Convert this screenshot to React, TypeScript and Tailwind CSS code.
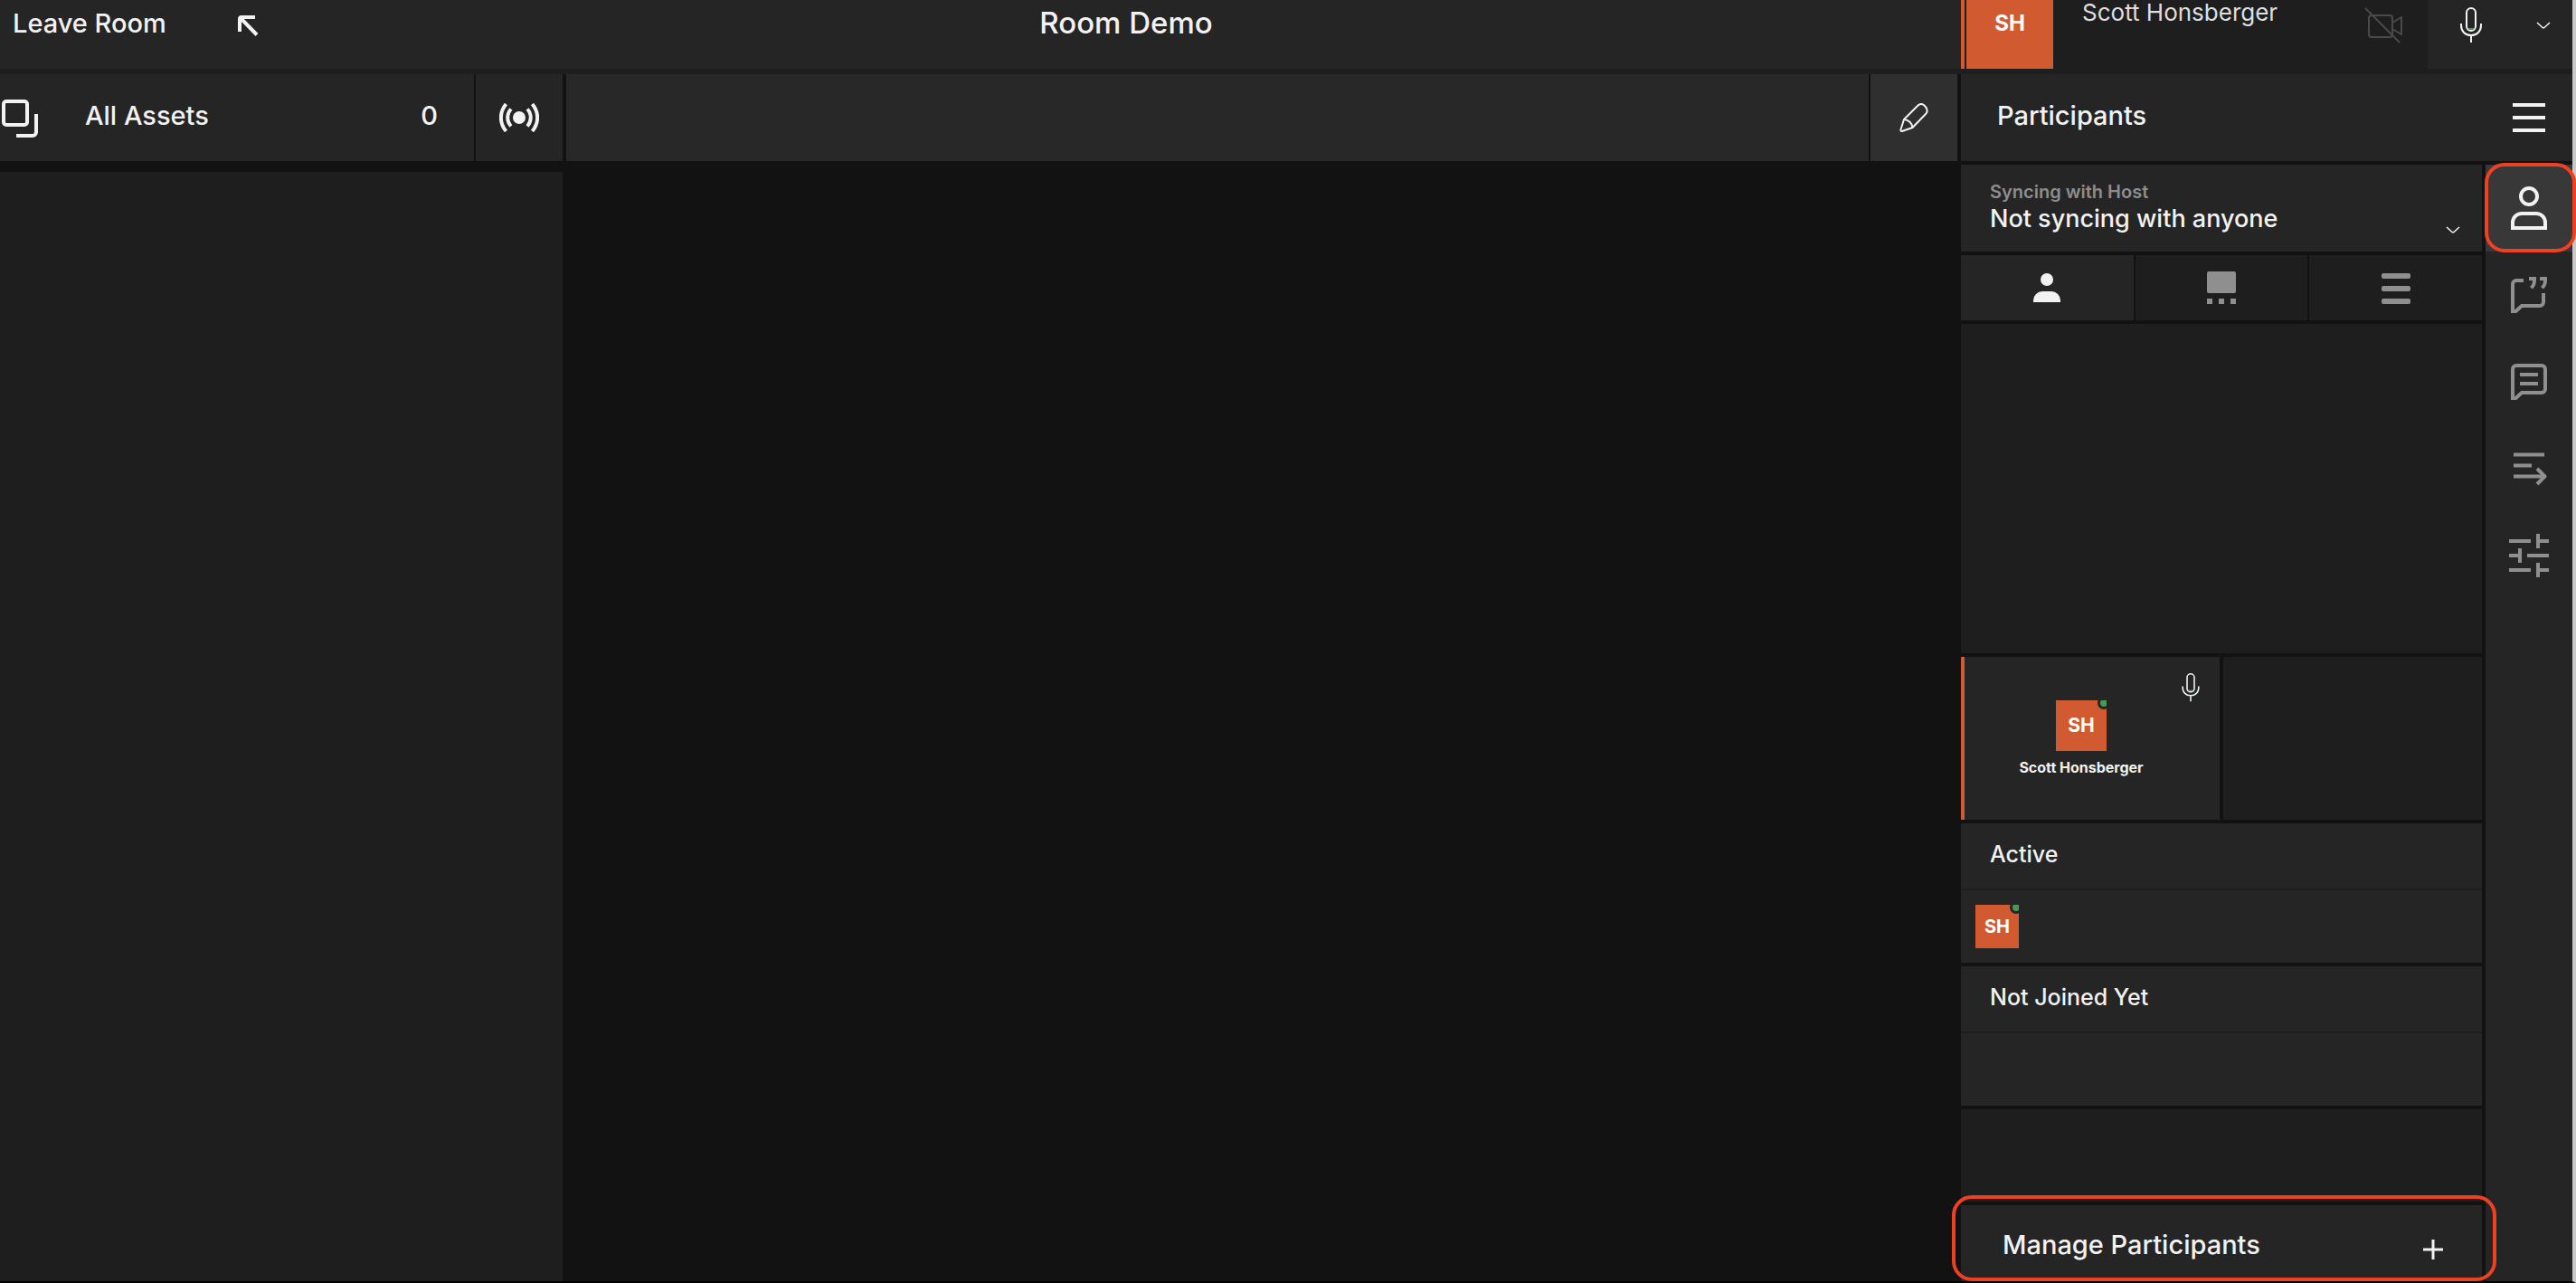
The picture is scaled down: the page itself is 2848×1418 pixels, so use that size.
import { useState } from 'react';
import type { ReactNode } from 'react';
import clsx from 'clsx';

interface AvatarProps {
  className: string;
  online?: boolean;
}

function Avatar({ className, online = false }: AvatarProps) {
  return (
    <div className={clsx('relative flex shrink-0 items-center justify-center overflow-hidden bg-[#d15a31] font-bold text-white', className)}>
      SH
      {online && (
        <span className="absolute -top-1 -right-1 h-3.5 w-3.5 rounded-full border-3 border-[#252525] bg-[#459a58]" />
      )}
    </div>
  );
}

function MicIcon({ className }: { className: string }) {
  return (
    <svg className={className} viewBox="0 0 24 40" fill="none" stroke="currentColor" strokeWidth="2">
      <rect x="7" y="1" width="10" height="25" rx="5" />
      <path d="M8.500 23h7c-.6 1.400-1.800 2-3.500 2s-2.900-.6-3.500-2z" fill="#459a58" stroke="none" />
      <path d="M1 18v2c0 6.500 4.500 11 11 11s11-4.500 11-11v-2M12 31v8" />
    </svg>
  );
}

function CameraOffIcon() {
  return (
    <svg className="h-10 w-11" viewBox="0 0 44 40" fill="none" stroke="currentColor" strokeWidth="2" strokeLinejoin="round">
      <path d="M8 9h20a3 3 0 0 1 3 3v5l10-6v19l-10-6v6a3 3 0 0 1-3 3H8a3 3 0 0 1-3-3V12a3 3 0 0 1 3-3zM31 17v7" />
      <path d="M1 1l38 38" />
    </svg>
  );
}

function ChevronDown() {
  return (
    <svg className="h-2 w-4" viewBox="0 0 16 8" fill="none" stroke="currentColor" strokeWidth="1.5">
      <path d="M1 1l6 5.500q1 .6 2 0L15 1" />
    </svg>
  );
}

function PencilIcon() {
  return (
    <svg className="h-8 w-8" viewBox="0 0 32 32" fill="none" stroke="currentColor" strokeWidth="2" strokeLinejoin="round">
      <path d="M5 18L20 3c3-3 6-2 8 0s4 5 1.500 8.500L14.500 27 3 31c-1 .3-2-.5-1.500-2L5 18z" />
      <path d="M5 18c5 .5 9 4 9.500 9" />
    </svg>
  );
}

function PersonIcon() {
  return (
    <svg className="h-12 w-10" viewBox="0 0 40 48" fill="none" stroke="currentColor" strokeWidth="4">
      <circle cx="20" cy="11" r="9" />
      <path d="M2 46V40a10 10 0 0 1 10-10h16a10 10 0 0 1 10 10v6z" />
    </svg>
  );
}

function QuoteIcon() {
  return (
    <svg className="h-10 w-10" viewBox="0 0 40 40" fill="none" stroke="currentColor" strokeWidth="4">
      <path d="M14 4H6a4 4 0 0 0-4 4v30h3.500l6.500-6h20a4 4 0 0 0 4-4V18" />
      <path d="M20 0h8v4c0 4-1.500 7-4 9.500l-3-2.500c2-2 3-4 3-7h-4zM32 0h8v4c0 4-1.500 7-4 9.500l-3-2.500c2-2 3-4 3-7h-4z" fill="currentColor" stroke="none" />
    </svg>
  );
}

function ChatIcon() {
  return (
    <svg className="h-10 w-10" viewBox="0 0 40 40" fill="none" stroke="currentColor" strokeWidth="4">
      <path d="M6 2h28a4 4 0 0 1 4 4v22a4 4 0 0 1-4 4H12l-6.500 6H2V6a4 4 0 0 1 4-4z" />
      <path d="M10 12h20M10 22h20" />
    </svg>
  );
}

function QueueIcon() {
  return (
    <svg className="h-10 w-10" viewBox="0 0 40 40" fill="none" stroke="currentColor" strokeWidth="4">
      <path d="M3 4.500h34M3 16.500h20M3 28.500h35" />
      <path d="M29 20l8.500 8.500L29 37" strokeLinejoin="round" />
    </svg>
  );
}

function SlidersIcon() {
  return (
    <svg className="h-12 w-11" viewBox="0 0 44 48" fill="none" stroke="currentColor" strokeWidth="4">
      <path d="M0 8h24M32 0v16M32 8h12M0 24h12M12 16v16M20 24h24M0 40h24M32 32v16M32 40h12" />
    </svg>
  );
}

interface SectionProps {
  title: string;
  children?: ReactNode;
}

function Section({ title, children }: SectionProps) {
  return (
    <section className="flex flex-col gap-0.5 bg-[#1e1e1e]">
      <h3 className="flex h-18 items-center bg-[#252525] px-8 pb-0.5 text-[25px] font-medium">{title}</h3>
      <div className="flex h-20 items-center bg-[#252525] px-4">{children}</div>
    </section>
  );
}

const railItems = [
  { label: 'Participants', icon: <PersonIcon /> },
  { label: 'Quotes', icon: <QuoteIcon /> },
  { label: 'Chat', icon: <ChatIcon /> },
  { label: 'Queue', icon: <QueueIcon /> },
  { label: 'Settings', icon: <SlidersIcon /> },
];

const viewTabs = [
  {
    label: 'People view',
    icon: (
      <svg className="h-8 w-8" viewBox="0 0 32 32" fill="currentColor">
        <circle cx="16" cy="7" r="7" />
        <path d="M1 32v-2a10 10 0 0 1 10-10h10a10 10 0 0 1 10 10v2z" />
      </svg>
    ),
  },
  {
    label: 'Stage view',
    icon: (
      <svg className="h-9 w-8" viewBox="0 0 32 36" fill="currentColor">
        <rect width="32" height="24" rx="2" />
        <path d="M0 30h6v6H0zM13 30h6v6h-6zM26 30h6v6h-6z" />
      </svg>
    ),
  },
  {
    label: 'List view',
    icon: (
      <svg className="h-9 w-8" viewBox="0 0 32 36" fill="currentColor">
        <rect y="2" width="32" height="6" rx="2" />
        <rect y="16" width="32" height="6" rx="2" />
        <rect y="30" width="32" height="6" rx="2" />
      </svg>
    ),
  },
];

function TopBar() {
  return (
    <header className="flex h-[76px] shrink-0 bg-[#252525]">
      <button className="flex w-[322px] shrink-0 items-center justify-between pr-9 pb-6 pl-3.5 text-[29px] font-medium">
        Leave Room
        <svg className="mt-1 h-6 w-6" viewBox="0 0 24 24" fill="none" stroke="currentColor" strokeWidth="4">
          <path d="M20 3H5a2 2 0 0 0-2 2v14M3.500 3.500L22 22.500" />
        </svg>
      </button>
      <h1 className="flex flex-1 items-center justify-center pb-6 text-[33px] font-medium">Room Demo</h1>
      <div className="flex w-[676px] shrink-0 bg-[#1e1e1e]">
        <div className="w-1 bg-[#d15a31]" />
        <Avatar className="ml-0.5 h-full w-24 pb-6 text-[24px]" />
        <span className="flex-1 pl-8 text-[26px] leading-7 text-[#dedede]">Scott Honsberger</span>
        <button aria-label="Turn camera on" className="pr-6.5 pb-5 pl-7 text-[#494949]">
          <CameraOffIcon />
        </button>
        <div className="flex w-40 bg-[#252525]">
          <button aria-label="Mute" className="flex w-24 items-center justify-center pb-5">
            <MicIcon className="h-10 w-6" />
          </button>
          <button aria-label="Audio options" className="flex flex-1 items-center justify-center pb-5">
            <ChevronDown />
          </button>
        </div>
      </div>
    </header>
  );
}

function ToolBar() {
  return (
    <div className="flex h-24 shrink-0 gap-1">
      <div className="flex w-[622px] shrink-0 gap-0.5">
        <button className="flex flex-1 items-center bg-[#252525] pr-10 text-[29px] font-medium">
          <svg className="h-11 w-11" viewBox="0 0 44 44" fill="none" stroke="currentColor" strokeWidth="4">
            <rect x="4" y="4" width="26" height="26" rx="3" />
            <path d="M40 18v20a4 4 0 0 1-4 4H18" />
          </svg>
          <span className="flex-1 pb-1 pl-12.5 text-left">All Assets</span>
          <span className="pb-1">0</span>
        </button>
        <button aria-label="Broadcast" className="flex w-24 items-center justify-center bg-[#252525]">
          <svg className="h-8 w-11" viewBox="0 0 44 32" fill="none" stroke="currentColor" strokeWidth="4">
            <circle cx="22" cy="16" r="7" fill="currentColor" stroke="none" />
            <path d="M13 6.500c-5 5.500-5 13.500 0 19M31 6.500c5 5.500 5 13.500 0 19M7.500 1c-7.500 9-7.500 21 0 30M36.500 1c7.500 9 7.500 21 0 30" />
          </svg>
        </button>
      </div>
      <div className="flex flex-1 gap-0.5">
        <div className="flex-1 bg-[#282828]" />
        <button aria-label="Annotate" className="flex w-24 items-center justify-center bg-[#2f2f2f]">
          <PencilIcon />
        </button>
      </div>
      <div className="flex w-[676px] shrink-0 items-center justify-between bg-[#252525] pr-7.5 pl-10">
        <h2 className="pb-1 text-[29px] font-medium">Participants</h2>
        <button aria-label="Menu" className="flex w-9 flex-col gap-2.5">
          <span className="h-1 bg-[#f2f2f2]" />
          <span className="h-1 bg-[#f2f2f2]" />
          <span className="h-1 bg-[#f2f2f2]" />
        </button>
      </div>
    </div>
  );
}

function ParticipantsPanel() {
  const [view, setView] = useState(0);

  return (
    <div className="flex flex-1 flex-col gap-1">
      <div className="relative flex h-24 shrink-0 flex-col bg-[#252525] px-8 pt-[18px]">
        <label htmlFor="sync" className="text-[20px] leading-6 font-semibold text-[#8d8d8d]">
          Syncing with Host
        </label>
        <select id="sync" className="w-full appearance-none bg-transparent text-[27px] leading-9 font-medium outline-none">
          <option>Not syncing with anyone</option>
        </select>
        <span className="pointer-events-none absolute right-6 bottom-5">
          <ChevronDown />
        </span>
      </div>

      <div className="flex h-18 shrink-0 gap-0.5">
        {viewTabs.map((tab, i) => (
          <button
            key={tab.label}
            aria-label={tab.label}
            onClick={() => setView(i)}
            className={clsx('flex flex-1 items-center justify-center', view === i ? 'bg-[#252525]' : 'bg-[#1e1e1e] text-[#8f8f8f]')}
          >
            {tab.icon}
          </button>
        ))}
      </div>

      <div className="h-[364px] shrink-0 bg-[#1e1e1e]" />

      <div className="grid h-45 shrink-0 grid-cols-2 gap-1">
        <div className="relative flex flex-col items-center border-l-4 border-[#d15a31] bg-[#252525] pt-12 pr-6">
          <Avatar online className="h-14 w-14 text-[21px]" />
          <span className="mt-1.5 text-[16px] leading-6 font-bold">Scott Honsberger</span>
          <span className="absolute top-4.5 right-5.5">
            <MicIcon className="h-8 w-5" />
          </span>
        </div>
        <div className="bg-[#1e1e1e]" />
      </div>

      <Section title="Active">
        <Avatar online className="h-12 w-12 text-[20px]" />
      </Section>
      <Section title="Not Joined Yet" />

      <div className="flex-1 bg-[#1e1e1e]" />

      <div className="relative z-10 h-21 shrink-0">
        <button className="flex h-full w-full items-center justify-between bg-[#252525] pt-1 pr-10.5 pl-11.5 text-[29px] font-medium">
          Manage Participants
          <svg className="mt-2.5 h-6 w-6" viewBox="0 0 24 24" stroke="currentColor" strokeWidth="3">
            <path d="M1 12h22M12 1v22" />
          </svg>
        </button>
        {/* Highlight ring */}
        <div className="pointer-events-none absolute -top-[11px] -right-4 -left-2.5 bottom-0 rounded-[22px] border-4 border-[#ee4023]" />
      </div>
    </div>
  );
}

function SideRail() {
  const [active, setActive] = useState(0);

  return (
    <nav className="relative flex w-24 shrink-0 flex-col bg-[#252525]">
      {railItems.map((item, i) => (
        <button
          key={item.label}
          aria-label={item.label}
          onClick={() => setActive(i)}
          className={clsx('flex h-24 items-center justify-center', active === i ? 'bg-[#383838]' : 'text-[#8f8f8f]')}
        >
          {item.icon}
        </button>
      ))}
      {/* Highlight ring */}
      <div className="pointer-events-none absolute -top-0.5 -right-1 -left-px h-[99px] rounded-[22px] border-4 border-[#ee4023]" />
    </nav>
  );
}

export default function App() {
  return (
    <div className="flex min-h-screen flex-col border-r-4 border-b-2 border-r-[#c8c8c8] border-b-black bg-[#121212] font-['Inter','Liberation_Sans',sans-serif] text-[#f2f2f2]">
      <TopBar />
      <div className="h-1.5 shrink-0 bg-[#1e1e1e]" />
      <ToolBar />
      <main className="flex flex-1 gap-1">
        <aside className="mt-3 w-[622px] shrink-0 bg-[#1e1e1e]" />
        <div className="flex-1" />
        <div className="mt-1 flex w-[676px] shrink-0 gap-1">
          <ParticipantsPanel />
          <SideRail />
        </div>
      </main>
    </div>
  );
}
